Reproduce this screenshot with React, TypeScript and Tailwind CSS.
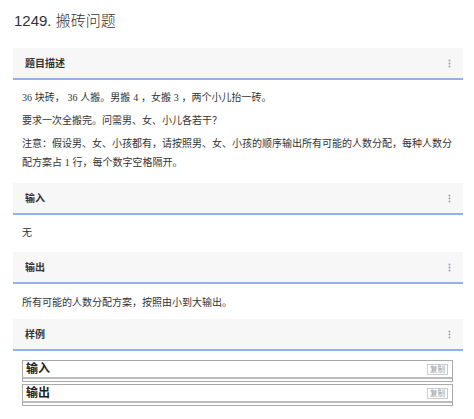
import React from 'react';

const cjk = { fontFamily: '"Liberation Sans", "Noto Sans CJK SC", sans-serif' };
const num = 'font-["Liberation_Serif"]';

function Dots() {
  return (
    <svg width="3" height="9" viewBox="0 0 3 9" className="text-gray-400">
      <circle cx="1.5" cy="1.5" r="1" fill="currentColor" />
      <circle cx="1.5" cy="4.5" r="1" fill="currentColor" />
      <circle cx="1.5" cy="7.5" r="1" fill="currentColor" />
    </svg>
  );
}

function Header({ title }: { title: string }) {
  return (
    <div className="flex h-[32px] items-center justify-between bg-[#f7f7f7] border-b-2 border-[#8fb3e6] pl-3 pr-3">
      <span className="text-[10px] font-bold text-[#333]">{title}</span>
      <Dots />
    </div>
  );
}

function SampleBox({ label }: { label: string }) {
  return (
    <div className="border border-[#aaa]">
      <div className="flex h-[18px] items-center justify-between border-b-2 border-[#bbb] bg-white pl-[3px] pr-[4px]">
        <span className="text-[12px] font-bold text-[#222]">{label}</span>
        <span className="border border-[#ccc] px-[2px] text-[7.5px] leading-[9px] text-[#999]">复制</span>
      </div>
      <div className="h-[2px] bg-white" />
    </div>
  );
}

export default function App() {
  return (
    <div className="w-[474px] h-[419px] bg-white text-[#333] overflow-hidden" style={cjk}>
      <h1 className="pl-[14px] pt-[12px] text-[15px] leading-[18px] font-light text-[#333]">1249. 搬砖问题</h1>

      <div className="mt-[18px] ml-[13px] w-[450px]">
        <Header title="题目描述" />
        <div className="px-[9px] pt-[8px] pb-[11px] text-[10px] leading-[19px] text-[#333]">
          <p>
            <span className={num}>36</span> 块砖， <span className={num}>36</span> 人搬。男搬 <span className={num}>4</span> ，女搬 <span className={num}>3</span> ，两个小儿抬一砖。
          </p>
          <p className="mt-[4px]">要求一次全搬完。问需男、女、小儿各若干？</p>
          <p className="mt-[4px]">
            注意：假设男、女、小孩都有，请按照男、女、小孩的顺序输出所有可能的人数分配，每种人数分配方案占 <span className={num}>1</span> 行，每个数字空格隔开。
          </p>
        </div>

        <Header title="输入" />
        <div className="px-[9px] pt-[8px] pb-[10px] text-[10px] leading-[19px]">无</div>

        <Header title="输出" />
        <div className="px-[9px] pt-[9px] pb-[7px] text-[10px] leading-[19px]">所有可能的人数分配方案，按照由小到大输出。</div>

        <Header title="样例" />
        <div className="mt-[9px] ml-[9px] w-[431px] flex flex-col gap-[2px]">
          <SampleBox label="输入" />
          <SampleBox label="输出" />
        </div>
      </div>
    </div>
  );
}
